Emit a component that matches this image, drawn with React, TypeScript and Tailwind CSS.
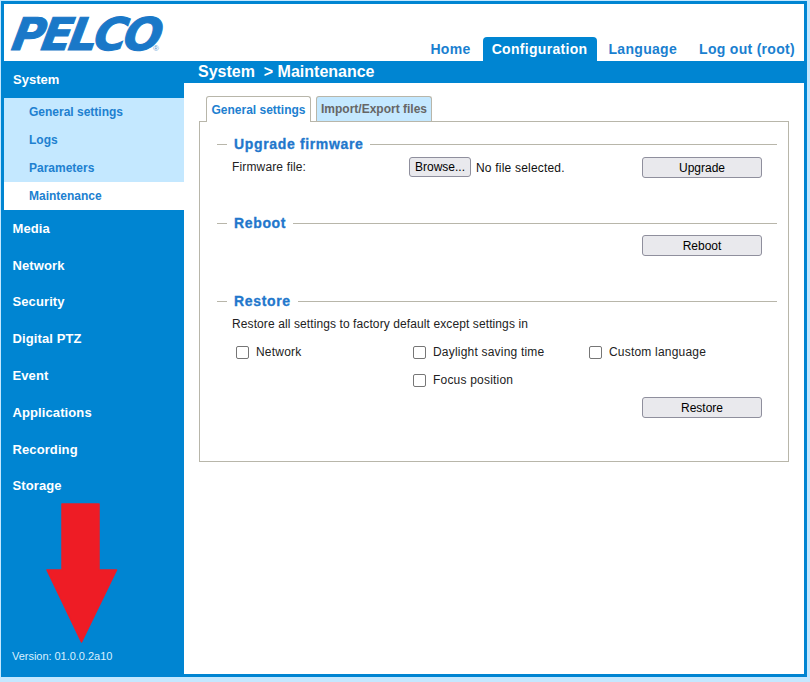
const font = "font-['Liberation_Sans',Arial,sans-serif]"

function SideItem({ label }: { label: string }) {
  return <div className="h-[36.8px] pl-[11.5px] flex items-center text-[13px] tracking-[0.1px] font-bold text-white">{label}</div>
}

function SubItem({ label, active }: { label: string; active?: boolean }) {
  return (
    <div className={`h-7 pl-[25px] flex items-center text-[12px] font-bold text-[#2080d0] ${active ? 'bg-white' : ''}`}>
      {label}
    </div>
  )
}

function Legend({ title }: { title: string }) {
  return (
    <div className="flex items-center gap-[7px] pl-[17px] pr-[11px]">
      <div className="w-[10px] h-px bg-[#b8b6aa]" />
      <div className="text-[14px] font-bold tracking-[0.65px] text-[#2277cc] leading-4 [-webkit-text-stroke:0.3px_#2277cc]">{title}</div>
      <div className="flex-1 h-px bg-[#b8b6aa]" />
    </div>
  )
}

function Btn({ label }: { label: string }) {
  return (
    <button className="block w-[120px] h-[21px] rounded-[3px] border border-[#8f8f9d] bg-[#e9e9ed] text-[12px] text-black leading-none">
      {label}
    </button>
  )
}

function Check({ label }: { label: string }) {
  return (
    <div className="flex items-center gap-[7px] h-7 text-[12px] tracking-[0.2px] text-[#222]">
      <span className="w-[13px] h-[13px] rounded-[2px] border border-[#767676] bg-white" />
      {label}
    </div>
  )
}

export default function App() {
  return (
    <div className={`relative w-[810px] h-[682px] overflow-hidden bg-[#c4e8ff] pl-px pt-px ${font}`}>
      <div className="w-[806px] h-[676px] bg-[#0085d2] flex flex-col p-[3px] pl-0 pb-[3px]">
        {/* header */}
        <div className="h-[57px] ml-[3px] bg-white flex items-end justify-between shrink-0">
          <div className="self-start pt-[10px] pl-[9px] flex items-start">
            <div className="relative w-[150px] h-[40px] flex items-center">
              <span className="inline-block font-['DejaVu_Sans',sans-serif] text-[45px] leading-none font-bold italic tracking-[-3.5px] text-[#1a78c8] [-webkit-text-stroke:1px_#1a78c8] -skew-x-[10deg]">
                PELCO
              </span>
              <span className="absolute left-[140px] top-[31px] text-[8px] leading-none text-[#5a9bd5]">®</span>
            </div>
          </div>
          <div className="flex items-end h-6 pr-[5px] text-[14px] font-bold text-[#1a7fd0] tracking-[0.3px]">
            <div className="px-[5px] mr-[7px] h-6 flex items-center">Home</div>
            <div className="w-[114px] h-6 flex items-center justify-center bg-[#0085d2] text-white rounded-t-[4px]">Configuration</div>
            <div className="ml-[12px] h-6 flex items-center">Language</div>
            <div className="ml-[22px] mr-[4px] h-6 flex items-center">Log out (root)</div>
          </div>
        </div>
        {/* body */}
        <div className="flex-1 flex min-h-0">
          <div className="w-[183px] shrink-0 flex flex-col">
            <div className="h-[37px] pl-3 flex items-center text-[13px] font-bold text-white">System</div>
            <div className="ml-[3px] mb-[0.2px] bg-[#c4e8ff]">
              <SubItem label="General settings" />
              <SubItem label="Logs" />
              <SubItem label="Parameters" />
              <SubItem label="Maintenance" active />
            </div>
            <SideItem label="Media" />
            <SideItem label="Network" />
            <SideItem label="Security" />
            <SideItem label="Digital PTZ" />
            <SideItem label="Event" />
            <SideItem label="Applications" />
            <SideItem label="Recording" />
            <SideItem label="Storage" />
            <div className="mt-auto mb-3 pl-[11px] text-[11px] tracking-[-0.03px] leading-3 text-[#d8f0ff]">Version: 01.0.0.2a10</div>
          </div>
          <div className="flex-1 flex flex-col min-w-0">
            <div className="h-[22px] shrink-0 pl-[14px] flex items-center text-[16px] font-bold text-white">
              System&nbsp;&nbsp;&gt; Maintenance
            </div>
            <div className="flex-1 bg-white pt-[13px] pl-[15px] pr-[15px]">
              <div className="flex gap-[5px] pl-[7px] h-[26px]">
                <div className="relative z-10 w-[105px] h-[26px] -mb-px border border-b-0 border-[#b8b6aa] rounded-t-[3px] bg-white text-[12px] font-bold text-[#2080d0] flex items-center justify-center">
                  General settings
                </div>
                <div className="w-[116px] h-[25px] border border-b-0 border-[#b8b6aa] rounded-t-[3px] bg-[#c4e8ff] text-[12px] font-bold text-[#666] flex items-center justify-center">
                  Import/Export files
                </div>
              </div>
              <div className="h-[341px] -mt-px border border-[#b8b6aa] pt-[14px]">
                <Legend title="Upgrade firmware" />
                <div className="flex items-start pl-8 pr-[26px] pt-[5px]">
                  <div className="w-[177px] mt-[2px] text-[12px] tracking-[0.15px] text-[#222] leading-4">Firmware file:</div>
                  <button className="w-[62px] h-[20px] rounded-[3px] border border-[#8f8f9d] bg-[#e9e9ed] text-[12px] text-black leading-none">Browse...</button>
                  <div className="ml-[5px] mt-[3px] text-[12px] tracking-[0.2px] text-[#111] leading-4">No file selected.</div>
                  <div className="ml-auto"><Btn label="Upgrade" /></div>
                </div>
                <div className="pt-[37px]">
                  <Legend title="Reboot" />
                </div>
                <div className="flex justify-end pr-[26px] pt-[4px]">
                  <Btn label="Reboot" />
                </div>
                <div className="pt-[37px]">
                  <Legend title="Restore" />
                </div>
                <div className="pl-8 pt-[7px] text-[12px] tracking-[0.1px] text-[#222] leading-4">Restore all settings to factory default except settings in</div>
                <div className="grid grid-cols-[177px_176px_1fr] pl-[36px] pt-[6px]">
                  <Check label="Network" />
                  <Check label="Daylight saving time" />
                  <Check label="Custom language" />
                  <div />
                  <Check label="Focus position" />
                </div>
                <div className="flex justify-end pr-[26px] pt-[3px]">
                  <Btn label="Restore" />
                </div>
              </div>
            </div>
          </div>
        </div>
      </div>
      {/* red annotation arrow */}
      <svg className="absolute left-[46px] top-[503px]" width="72" height="140" viewBox="0 0 72 140">
        <path d="M16 1H53V67H70.5L35.5 139L1 67H16Z" fill="#ee1c25" stroke="#ee1c25" strokeWidth="1.5" strokeLinejoin="round" />
      </svg>
    </div>
  )
}
